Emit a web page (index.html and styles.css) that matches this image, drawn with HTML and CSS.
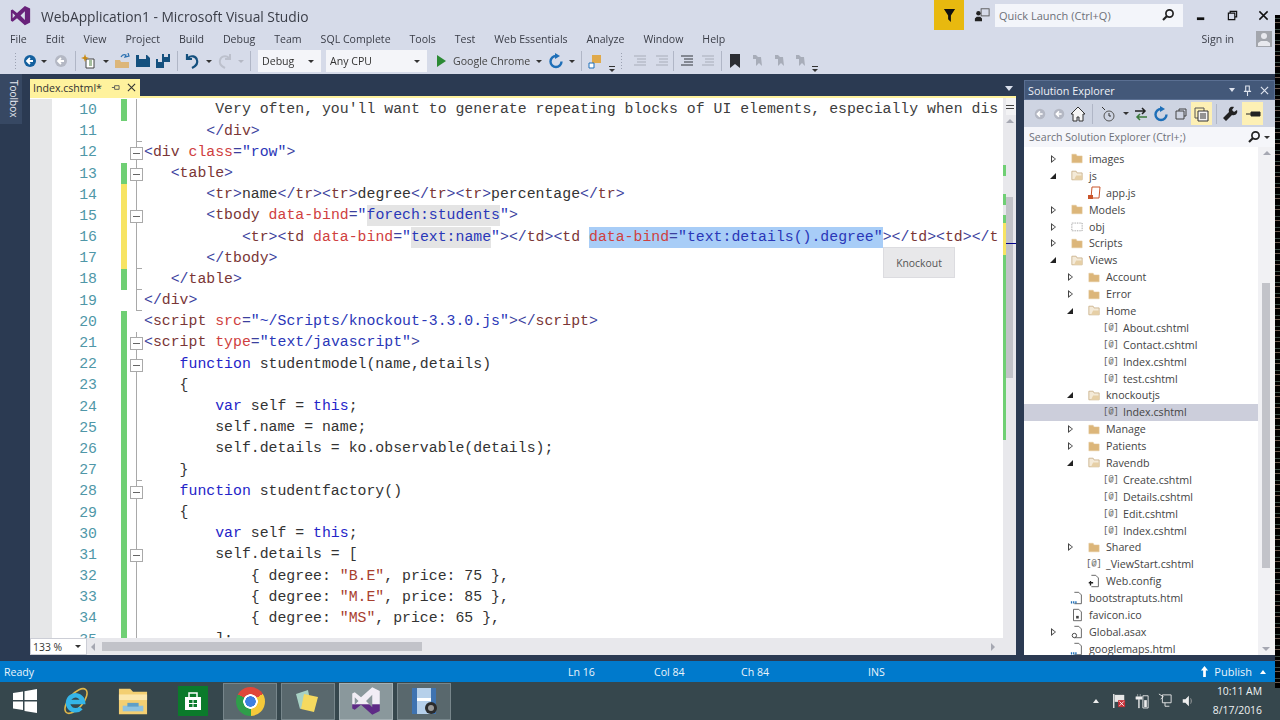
FILE: index.html
```html
<!DOCTYPE html>
<html lang="en">
<head>
<meta charset="utf-8">
<title>WebApplication1 - Microsoft Visual Studio</title>
<link rel="stylesheet" href="styles.css">
</head>
<body>
<svg class="defs" aria-hidden="true">
  <symbol id="fc" viewBox="0 0 14 12"><path d="M1 1h5l1 2h6v8H1z" fill="#dcb67a" stroke="#e3c99a" stroke-width=".6"/></symbol>
  <symbol id="fo" viewBox="0 0 14 12"><path d="M1 1h5l1 2h6v8H1z" fill="#f4ead8" stroke="#c9b18a"/><path d="M4 10l2-4h7v5H3z" fill="#e6cfa6"/></symbol>
  <symbol id="page" viewBox="0 0 14 16"><path d="M4 1.5h5l3 3v10H4" fill="#fff" stroke="#555" stroke-width="1"/></symbol>
  <symbol id="vs" viewBox="0 0 24 24"><path fill-rule="evenodd" d="M17 1l6 3v16l-6 3-9-8-5 4-2-1V6l2-1 5 4zm0 6l-5 5 5 5zM3 9v6l3-3z"/></symbol>
  <symbol id="blob" viewBox="0 0 16 16"><circle cx="8" cy="8" r="6"/><path d="M8 5L5 8l3 3M5 8h6" fill="none" stroke="#fff" stroke-width="1.8"/></symbol>
  <symbol id="lines" viewBox="0 0 16 16"><path d="M2 3h12M5 6h9M5 9h9M2 12h12" stroke="currentColor" fill="none"/></symbol>
  <symbol id="flagm" viewBox="0 0 16 16"><path d="M4 2h3l2 2h3l1 9-3-3-3 3V6H4z" fill="currentColor"/></symbol>
  <symbol id="search" viewBox="0 0 14 14"><circle cx="8.5" cy="5.5" r="3.6" fill="none" stroke="#222" stroke-width="1.7"/><path d="M6 8l-4 4" stroke="#222" stroke-width="2.2"/></symbol>
</svg>

<header class="title">
  <svg class="vs-logo"><use href="#vs"/></svg>
  <span class="app-name">WebApplication1 - Microsoft Visual Studio</span>
  <span class="filter"><svg class="filter-ic" viewBox="0 0 14 16"><path d="M1 1h12L8.500 8v7l-3-3V8z"/></svg></span>
  <svg class="feedback" viewBox="0 0 18 18"><rect x="8" y="2" width="9" height="8" fill="none" stroke="#555"/><circle cx="5" cy="7" r="2.500" fill="#222"/><path d="M1 16v-3l2-2h4l2 2v3z" fill="#222"/></svg>
  <div class="quick"><span>Quick Launch (Ctrl+Q)</span><svg class="s14"><use href="#search"/></svg></div>
  <div class="winbtns">
    <span class="winbtn"><svg class="w-ic" viewBox="0 0 12 12"><path d="M1 8h8v3H1z" fill="#111"/></svg></span>
    <span class="winbtn"><svg class="w-ic" viewBox="0 0 12 12"><path d="M3.500 3V1.500h7v6H8.500M1.500 3.500h7v7h-7z" fill="none" stroke="#111" stroke-width="1.300"/></svg></span>
    <span class="winbtn"><svg class="w-ic" viewBox="0 0 12 12"><path d="M1.500 1.500l9 9m0-9l-9 9" stroke="#111" stroke-width="1.600"/></svg></span>
  </div>
</header>

<nav class="menu">
  <span>File</span><span>Edit</span><span>View</span><span>Project</span><span>Build</span><span>Debug</span><span>Team</span><span>SQL Complete</span><span>Tools</span><span>Test</span><span>Web Essentials</span><span>Analyze</span><span>Window</span><span>Help</span>
  <span class="signin">Sign in</span>
  <svg class="user" viewBox="0 0 16 16"><rect width="16" height="16" fill="#a3a6ad"/><circle cx="8" cy="5" r="3" fill="#e8e9ee"/><path d="M2 15v-3l3-2h6l3 2v3z" fill="#e8e9ee"/></svg>
</nav>

<div class="tools">
  <span class="s w12"><i class="grip"></i></span>
  <span class="s w16"><svg class="i16 blue"><use href="#blob"/></svg></span>
  <span class="s w12"><i class="dd"></i></span>
  <span class="s w22"><svg class="i16 mute"><use href="#blob"/></svg></span>
  <span class="s w6"><i class="sep"></i></span>
  <span class="s w22"><svg class="i16" viewBox="0 0 16 16"><path d="M5 6h8v9H5z" fill="#fff" stroke="#444"/><path d="M4 1l1 3 3 1-3 1-1 3-1-3-3-1 3-1z" fill="#c98a12"/><path d="M8 8h3M8 10h3M8 12h3" stroke="#4d7e3e"/></svg></span>
  <span class="s w12"><i class="dd"></i></span>
  <span class="s w20"><svg class="i16" viewBox="0 0 16 16"><path d="M1 7h5l1 2h8v6H1z" fill="#dcb67a"/><path d="M7 4c1-2 3-3 5-2l-1 2 4-1-1-3" fill="none" stroke="#2a6fb0" stroke-width="1.200"/></svg></span>
  <span class="s w22"><svg class="i16" viewBox="0 0 16 16"><path d="M1 2h11l3 3v9H1z" fill="#14507e"/><path d="M4 2h7v4H4z" fill="#d6dbe9"/><path d="M4 10h8v4H4z" fill="#14507e"/></svg></span>
  <span class="s w18"><svg class="i16" viewBox="0 0 16 16"><path d="M7 1h8v8H7z" fill="#14507e"/><path d="M9 1h4v3H9z" fill="#d6dbe9"/><path d="M1 6h8v9H1z" fill="#14507e"/><path d="M3 6h4v3H3z" fill="#d6dbe9"/></svg></span>
  <span class="s w10"><i class="sep"></i></span>
  <span class="s w20"><svg class="i16" viewBox="0 0 16 16"><path d="M3 1v5h5M4 5c3-3 8-2 9 2 1 3-1 6-5 8" fill="none" stroke="#14507e" stroke-width="2.200"/></svg></span>
  <span class="s w14"><i class="dd"></i></span>
  <span class="s w18"><svg class="i16" viewBox="0 0 16 16"><path d="M13 1v5H8M12 5C9 2 4 3 3 7c-1 3 1 6 5 8" fill="none" stroke="#bcc0cc" stroke-width="2"/></svg></span>
  <span class="s w14"><i class="dd off"></i></span>
  <span class="s w4"><i class="sep"></i></span>
  <span class="combo debug">Debug<i class="dd"></i></span>
  <span class="combo cpu">Any CPU<i class="dd"></i></span>
  <span class="s w16 play"><i class="tri"></i></span>
  <span class="chrome">Google Chrome</span>
  <span class="s w14"><i class="dd"></i></span>
  <span class="s w20"><svg class="i16" viewBox="0 0 16 16"><path d="M8 3a5.500 5.500 0 1 0 5.500 5.500" fill="none" stroke="#1e6fb8" stroke-width="2.400"/><path d="M7 0l5 3-5 3z" fill="#1e6fb8"/></svg></span>
  <span class="s w12"><i class="dd"></i></span>
  <span class="s w6"><i class="sep"></i></span>
  <span class="s w22"><svg class="i16" viewBox="0 0 16 16"><path d="M5 2h9v8H5z" fill="#e0a94a"/><path d="M2 10h5v5H2z" fill="#fff" stroke="#1e6fb8"/></svg></span>
  <span class="s w12 low"><i class="more"></i></span>
  <span class="s w8"><i class="grip"></i></span>
  <span class="s w28 dim"><svg class="i16"><use href="#lines"/></svg></span>
  <span class="s w16 dim"><svg class="i16"><use href="#lines"/></svg></span>
  <span class="s w6"><i class="sep"></i></span>
  <span class="s w22 dark"><svg class="i16"><use href="#lines"/></svg></span>
  <span class="s w20 dim"><svg class="i16"><use href="#lines"/></svg></span>
  <span class="s w6"><i class="sep"></i></span>
  <span class="s w22"><svg class="i16" viewBox="0 0 16 16"><path d="M3 1h10v14l-5-4-5 4z" fill="#2b2d33"/></svg></span>
  <span class="s w22 dim"><svg class="i16"><use href="#flagm"/></svg></span>
  <span class="s w22 dim"><svg class="i16"><use href="#flagm"/></svg></span>
  <span class="s w20 dim"><svg class="i16"><use href="#flagm"/></svg></span>
  <span class="s w10 low"><i class="more"></i></span>
</div>

<main class="main">
  <aside class="toolbox"><span>Toolbox</span></aside>

  <section class="doc">
    <div class="tabs">
      <div class="tab">
        <span class="tab-name">Index.cshtml*</span>
        <svg class="pin" viewBox="0 0 10 10"><path d="M1 5h3M4 3h5v4H4z" fill="none" stroke="#555"/></svg>
        <svg class="tab-x" viewBox="0 0 10 10"><path d="M1 1l8 8m0-8l-8 8" stroke="#333" stroke-width="1.200"/></svg>
      </div>
      <i class="well-arrow"></i>
    </div>

    <div class="editor">
      <div class="code">
        <div class="row"><span class="gut"></span><span class="num">10</span><span class="bar g"></span><span class="fold ln"></span><span class="cd x">        Very often, you'll want to generate repeating blocks of UI elements, especially when dis</span></div>
        <div class="row"><span class="gut"></span><span class="num">11</span><span class="bar"></span><span class="fold end"></span><span class="cd">       <b class="d">&lt;/</b><b class="t">div</b><b class="d">&gt;</b></span></div>
        <div class="row"><span class="gut"></span><span class="num">12</span><span class="bar"></span><span class="fold box"></span><span class="cd"><b class="d">&lt;</b><b class="t">div</b> <b class="a">class</b><b class="d">=</b><b class="s">"row"</b><b class="d">&gt;</b></span></div>
        <div class="row"><span class="gut"></span><span class="num">13</span><span class="bar g"></span><span class="fold box"></span><span class="cd">   <b class="d">&lt;</b><b class="t">table</b><b class="d">&gt;</b></span></div>
        <div class="row"><span class="gut"></span><span class="num">14</span><span class="bar y"></span><span class="fold ln"></span><span class="cd">       <b class="d">&lt;</b><b class="t">tr</b><b class="d">&gt;</b>name<b class="d">&lt;/</b><b class="t">tr</b><b class="d">&gt;&lt;</b><b class="t">tr</b><b class="d">&gt;</b>degree<b class="d">&lt;/</b><b class="t">tr</b><b class="d">&gt;&lt;</b><b class="t">tr</b><b class="d">&gt;</b>percentage<b class="d">&lt;/</b><b class="t">tr</b><b class="d">&gt;</b></span></div>
        <div class="row"><span class="gut"></span><span class="num">15</span><span class="bar y"></span><span class="fold box"></span><span class="cd">       <b class="d">&lt;</b><b class="t">tbody</b> <b class="a">data-bind</b><b class="d">=</b><b class="s">"<em class="hl">forech:students</em>"</b><b class="d">&gt;</b></span></div>
        <div class="row"><span class="gut"></span><span class="num">16</span><span class="bar y"></span><span class="fold ln"></span><span class="cd">           <b class="d">&lt;</b><b class="t">tr</b><b class="d">&gt;&lt;</b><b class="t">td</b> <b class="a">data-bind</b><b class="d">=</b><b class="s">"<em class="hl">text:name</em>"</b><b class="d">&gt;&lt;/</b><b class="t">td</b><b class="d">&gt;&lt;</b><b class="t">td</b> <em class="sel"><b class="a">data-bind</b><b class="d">=</b><b class="s">"text:details().degree"</b></em><b class="d">&gt;&lt;/</b><b class="t">td</b><b class="d">&gt;&lt;</b><b class="t">td</b><b class="d">&gt;&lt;/</b><b class="t">t</b></span></div>
        <div class="row"><span class="gut"></span><span class="num">17</span><span class="bar y"></span><span class="fold end"></span><span class="cd">       <b class="d">&lt;/</b><b class="t">tbody</b><b class="d">&gt;</b></span></div>
        <div class="row"><span class="gut"></span><span class="num">18</span><span class="bar g"></span><span class="fold end"></span><span class="cd">   <b class="d">&lt;/</b><b class="t">table</b><b class="d">&gt;</b></span></div>
        <div class="row"><span class="gut"></span><span class="num">19</span><span class="bar"></span><span class="fold end"></span><span class="cd"><b class="d">&lt;/</b><b class="t">div</b><b class="d">&gt;</b></span></div>
        <div class="row"><span class="gut"></span><span class="num">20</span><span class="bar g"></span><span class="fold"></span><span class="cd"><b class="d">&lt;</b><b class="t">script</b> <b class="a">src</b><b class="d">=</b><b class="s">"~/Scripts/knockout-3.3.0.js"</b><b class="d">&gt;&lt;/</b><b class="t">script</b><b class="d">&gt;</b></span></div>
        <div class="row"><span class="gut"></span><span class="num">21</span><span class="bar g"></span><span class="fold box"></span><span class="cd"><b class="d">&lt;</b><b class="t">script</b> <b class="a">type</b><b class="d">=</b><b class="s">"text/javascript"</b><b class="d">&gt;</b></span></div>
        <div class="row"><span class="gut"></span><span class="num">22</span><span class="bar g"></span><span class="fold box"></span><span class="cd">    <b class="k">function</b> studentmodel(name,details)</span></div>
        <div class="row"><span class="gut"></span><span class="num">23</span><span class="bar g"></span><span class="fold ln"></span><span class="cd">    {</span></div>
        <div class="row"><span class="gut"></span><span class="num">24</span><span class="bar g"></span><span class="fold ln"></span><span class="cd">        <b class="k">var</b> self = <b class="k">this</b>;</span></div>
        <div class="row"><span class="gut"></span><span class="num">25</span><span class="bar g"></span><span class="fold ln"></span><span class="cd">        self.name = name;</span></div>
        <div class="row"><span class="gut"></span><span class="num">26</span><span class="bar g"></span><span class="fold ln"></span><span class="cd">        self.details = ko.observable(details);</span></div>
        <div class="row"><span class="gut"></span><span class="num">27</span><span class="bar g"></span><span class="fold end"></span><span class="cd">    }</span></div>
        <div class="row"><span class="gut"></span><span class="num">28</span><span class="bar g"></span><span class="fold box"></span><span class="cd">    <b class="k">function</b> studentfactory()</span></div>
        <div class="row"><span class="gut"></span><span class="num">29</span><span class="bar g"></span><span class="fold ln"></span><span class="cd">    {</span></div>
        <div class="row"><span class="gut"></span><span class="num">30</span><span class="bar g"></span><span class="fold ln"></span><span class="cd">        <b class="k">var</b> self = <b class="k">this</b>;</span></div>
        <div class="row"><span class="gut"></span><span class="num">31</span><span class="bar g"></span><span class="fold box"></span><span class="cd">        self.details = [</span></div>
        <div class="row"><span class="gut"></span><span class="num">32</span><span class="bar g"></span><span class="fold ln"></span><span class="cd">            { degree: <b class="r">"B.E"</b>, price: 75 },</span></div>
        <div class="row"><span class="gut"></span><span class="num">33</span><span class="bar g"></span><span class="fold ln"></span><span class="cd">            { degree: <b class="r">"M.E"</b>, price: 85 },</span></div>
        <div class="row"><span class="gut"></span><span class="num">34</span><span class="bar g"></span><span class="fold ln"></span><span class="cd">            { degree: <b class="r">"MS"</b>, price: 65 },</span></div>
        <div class="row"><span class="gut"></span><span class="num">35</span><span class="bar g"></span><span class="fold ln"></span><span class="cd">        ];</span></div>
        <div class="tip">Knockout</div>
      </div>
      <div class="vscroll">
        <i class="split"></i>
        <i class="up"></i>
        <div class="track"><i class="map"></i><i class="thumb"></i><i class="caret"></i></div>
      </div>
    </div>

    <div class="hbar">
      <div class="zoom">133 %<i class="dd"></i></div>
      <i class="arr-l"></i>
      <i class="hthumb"></i>
      <i class="arr-r"></i>
    </div>
  </section>

  <section class="se">
    <div class="se-head">
      <span class="se-title">Solution Explorer</span>
      <i class="se-dd"></i>
      <svg class="se-pin" viewBox="0 0 10 12"><path d="M3 1h4v6H3zM1 7h8M5 7v5" fill="none" stroke="#dfe4ef" stroke-width="1.200"/></svg>
      <svg class="se-x" viewBox="0 0 10 10"><path d="M1 1l8 8m0-8l-8 8" stroke="#dfe4ef" stroke-width="1.300"/></svg>
    </div>
    <div class="se-tools">
      <span class="s w22 start"><svg class="i14 mute"><use href="#blob"/></svg></span>
      <span class="s w16"><svg class="i14 mute"><use href="#blob"/></svg></span>
      <span class="s w22"><svg class="i16" viewBox="0 0 16 16"><path d="M8 1L1 8h2v7h4v-4h2v4h4V8h2z" fill="#f5f5f5" stroke="#333"/></svg></span>
      <span class="s w6"><i class="sep"></i></span>
      <span class="s w26"><svg class="i16" viewBox="0 0 16 16"><circle cx="9" cy="10" r="5" fill="none" stroke="#555"/><path d="M9 7v3h2M2 1l3 3" stroke="#333" fill="none"/></svg></span>
      <span class="s w10"><i class="dd"></i></span>
      <span class="s w20"><svg class="i16" viewBox="0 0 16 16"><path d="M2 5h10M9 2l3 3-3 3" stroke="#222" stroke-width="1.500" fill="none"/><path d="M14 11H4m3-3l-3 3 3 3" stroke="#3b7a3b" stroke-width="1.500" fill="none"/></svg></span>
      <span class="s w20"><svg class="i16" viewBox="0 0 16 16"><path d="M8 3a5.500 5.500 0 1 0 5.500 5.500" fill="none" stroke="#1e6fb8" stroke-width="2.400"/><path d="M7 0l5 3-5 3z" fill="#1e6fb8"/></svg></span>
      <span class="s w20"><svg class="i12" viewBox="0 0 12 12"><path d="M4 3V1h7v7H9M1 3h8v8H1z" fill="none" stroke="#444"/></svg></span>
      <span class="s on"><svg class="i16" viewBox="0 0 16 16"><path d="M1 2h9v10H1z" fill="none" stroke="#555"/><path d="M4 5h10v10H4z" fill="#f4f4f4" stroke="#333"/><path d="M6 8h6M6 10h6M6 12h6" stroke="#333"/></svg></span>
      <span class="s w8"><i class="sep"></i></span>
      <span class="s w20"><svg class="i16" viewBox="0 0 16 16"><path d="M15 4l-3 2-2-2 2-3c-3-1-6 1-5 5L1 12l3 3 6-6c4 1 6-2 5-5z" fill="#222"/></svg></span>
      <span class="s on gap"><svg class="i16" viewBox="0 0 16 16"><path d="M1 8h5M6 6h9v4H6z" stroke="#222" fill="#222"/></svg></span>
    </div>
    <div class="se-search"><span>Search Solution Explorer (Ctrl+;)</span><svg class="s14"><use href="#search"/></svg><i class="dd"></i></div>
    <div class="se-body">
      <div class="tree">
        <div class="it l0"><i class="ex"></i><span class="ic"><svg class="fold-ic"><use href="#fc"/></svg></span>images</div>
        <div class="it l0"><i class="ex open"></i><span class="ic"><svg class="fold-ic"><use href="#fo"/></svg></span>js</div>
        <div class="it l1"><i class="ex none"></i><span class="ic"><svg class="i14" viewBox="0 0 14 14"><path d="M5 1h8l-1 11H4z" fill="#fff" stroke="#c9542a"/><path d="M1 9h5v4H1z" fill="#c9542a"/></svg></span>app.js</div>
        <div class="it l0"><i class="ex"></i><span class="ic"><svg class="fold-ic"><use href="#fc"/></svg></span>Models</div>
        <div class="it l0"><i class="ex"></i><span class="ic"><svg class="fold-ic" viewBox="0 0 14 12"><path d="M1 2h12v9H1z" fill="none" stroke="#888" stroke-dasharray="1 1"/></svg></span>obj</div>
        <div class="it l0"><i class="ex"></i><span class="ic"><svg class="fold-ic"><use href="#fc"/></svg></span>Scripts</div>
        <div class="it l0"><i class="ex open"></i><span class="ic"><svg class="fold-ic"><use href="#fo"/></svg></span>Views</div>
        <div class="it l1"><i class="ex"></i><span class="ic"><svg class="fold-ic"><use href="#fc"/></svg></span>Account</div>
        <div class="it l1"><i class="ex"></i><span class="ic"><svg class="fold-ic"><use href="#fc"/></svg></span>Error</div>
        <div class="it l1"><i class="ex open"></i><span class="ic"><svg class="fold-ic"><use href="#fo"/></svg></span>Home</div>
        <div class="it l2"><i class="ex none"></i><span class="ic rz">[@]</span>About.cshtml</div>
        <div class="it l2"><i class="ex none"></i><span class="ic rz">[@]</span>Contact.cshtml</div>
        <div class="it l2"><i class="ex none"></i><span class="ic rz">[@]</span>Index.cshtml</div>
        <div class="it l2"><i class="ex none"></i><span class="ic rz">[@]</span>test.cshtml</div>
        <div class="it l1"><i class="ex open"></i><span class="ic"><svg class="fold-ic"><use href="#fo"/></svg></span>knockoutjs</div>
        <div class="it l2 cur"><i class="ex none"></i><span class="ic rz">[@]</span>Index.cshtml</div>
        <div class="it l1"><i class="ex"></i><span class="ic"><svg class="fold-ic"><use href="#fc"/></svg></span>Manage</div>
        <div class="it l1"><i class="ex"></i><span class="ic"><svg class="fold-ic"><use href="#fc"/></svg></span>Patients</div>
        <div class="it l1"><i class="ex open"></i><span class="ic"><svg class="fold-ic"><use href="#fo"/></svg></span>Ravendb</div>
        <div class="it l2"><i class="ex none"></i><span class="ic rz">[@]</span>Create.cshtml</div>
        <div class="it l2"><i class="ex none"></i><span class="ic rz">[@]</span>Details.cshtml</div>
        <div class="it l2"><i class="ex none"></i><span class="ic rz">[@]</span>Edit.cshtml</div>
        <div class="it l2"><i class="ex none"></i><span class="ic rz">[@]</span>Index.cshtml</div>
        <div class="it l1"><i class="ex"></i><span class="ic"><svg class="fold-ic"><use href="#fc"/></svg></span>Shared</div>
        <div class="it l1"><i class="ex none"></i><span class="ic rz">[@]</span>_ViewStart.cshtml</div>
        <div class="it l1"><i class="ex none"></i><span class="ic"><svg class="i14" viewBox="0 0 14 16"><use href="#page"/><path d="M1 10h5M3 8v5" stroke="#222" stroke-width="1.500"/></svg></span>Web.config</div>
        <div class="it l0"><i class="ex none"></i><span class="ic"><svg class="i14" viewBox="0 0 14 16"><use href="#page"/><path d="M0 13h7" stroke="#1e6fb8" stroke-width="2.500" stroke-dasharray="1.500 1"/></svg></span>bootstraptuts.html</div>
        <div class="it l0"><i class="ex none"></i><span class="ic"><svg class="i14" viewBox="0 0 14 16"><path d="M3 1.500h6l3 3v10H3z" fill="#fff" stroke="#555"/><path d="M6 9h3v3H6z" fill="#444"/></svg></span>favicon.ico</div>
        <div class="it l0"><i class="ex"></i><span class="ic"><svg class="i14" viewBox="0 0 14 16"><use href="#page"/><circle cx="4" cy="12" r="2.500" fill="#fff" stroke="#333"/></svg></span>Global.asax</div>
        <div class="it l0"><i class="ex none"></i><span class="ic"><svg class="i14" viewBox="0 0 14 16"><use href="#page"/><path d="M0 13h7" stroke="#1e6fb8" stroke-width="2.500" stroke-dasharray="1.500 1"/></svg></span>googlemaps.html</div>
      </div>
      <div class="se-scroll"><i class="up"></i><i class="se-thumb"></i><i class="down"></i></div>
    </div>
  </section>
</main>

<footer class="status">
  <span>Ready</span><span>Ln 16</span><span>Col 84</span><span>Ch 84</span><span>INS</span>
  <span class="publish"><svg class="pub-up" viewBox="0 0 10 12"><path d="M5 0l4 5H6.500v7h-3V5H1z" fill="#fff"/></svg>Publish<i class="caret-up"></i></span>
</footer>

<div class="taskbar">
  <span class="start-btn"><svg class="win" viewBox="0 0 24 24"><path d="M0 4l10-1.500V11H0zM11.500 2.300L24 0v11H11.500zM0 12.500h10V21L0 19.500zM11.500 12.500H24V24l-12.500-2z" fill="#fff"/></svg></span>
  <span class="pin-app ie"><svg class="app" viewBox="0 0 30 30"><ellipse cx="15" cy="15" rx="15" ry="7" transform="rotate(-50 15 15)" fill="none" stroke="#e2b84a" stroke-width="1.600"/><path d="M7 16h15a7.500 7.500 0 1 0-2 6" fill="none" stroke="#35b5e8" stroke-width="4.500"/></svg></span>
  <span class="pin-app fx"><svg class="app" viewBox="0 0 32 30"><path d="M1 2h12l3 3h15v24H1z" fill="#f3cf72"/><path d="M1 8h30v6H1z" fill="#fbe7ad"/><path d="M5 20h22v6H5z" fill="#8fc3e0"/><path d="M10 17h12v4H10z" fill="#5f9fc7"/></svg></span>
  <span class="pin-app st"><svg class="app" viewBox="0 0 30 30"><rect width="30" height="30" fill="#0b7a2b"/><path d="M7 11h16v13H7z" fill="#fff"/><path d="M11 11V7h8v4" fill="none" stroke="#fff" stroke-width="1.500"/><path d="M11 14h3.500v3H11zM15.500 14H19v3h-3.500zM11 18h3.500v3H11zM15.500 18H19v3h-3.500z" fill="#0b7a2b"/></svg></span>
  <span class="run"><i class="chrome-ic"></i></span>
  <span class="run"><svg class="app" viewBox="0 0 30 30"><path d="M3 8l12-4 3 15-11 4z" fill="#a8d2c4"/><path d="M11 8l14 3-4 15-13-3z" fill="#f5d95f"/></svg></span>
  <span class="run active"><svg class="app" viewBox="0 0 24 24"><defs><linearGradient id="vsg" x1="0" y1="0" x2="0" y2="1"><stop offset=".62" stop-color="#f1edf5"/><stop offset=".63" stop-color="#5e2a86"/></linearGradient></defs><path fill="url(#vsg)" fill-rule="evenodd" d="M17 1l6 3v16l-6 3-9-8-5 4-2-1V6l2-1 5 4zm0 6l-5 5 5 5zM3 9v6l3-3z"/></svg></span>
  <span class="run"><svg class="app" viewBox="0 0 30 30"><path d="M3 2h24v26H3z" fill="#b6d0ea"/><path d="M3 2h5v26H3zM22 2h5v26h-5z" fill="#3f73b0"/><path d="M8 12h14v3H8z" fill="#fff"/><circle cx="22" cy="22" r="6" fill="#2b2b2b"/><circle cx="22" cy="22" r="3" fill="#999"/></svg></span>
  <span class="spacer"></span>
  <div class="tray">
    <i class="tray-up"></i>
    <svg class="tray-ic" viewBox="0 0 16 18"><path d="M2 1v16" stroke="#eee" stroke-width="1.500"/><path d="M3 2h11v8H3z" fill="#e6e6e6"/><path d="M7 8h8v8H7z" fill="#c8323a"/><path d="M8.500 9.500l5 5m0-5l-5 5" stroke="#fff"/></svg>
    <svg class="tray-ic" viewBox="0 0 16 18"><path d="M3 1v3M6 1v3M1 4h7v3H5v10H4V7H1z" fill="#eee" stroke="#eee" stroke-width=".5"/><path d="M9 3h6v14H9z" fill="none" stroke="#eee"/><path d="M10.500 8h3v8h-3z" fill="#eee"/></svg>
    <svg class="tray-ic" viewBox="0 0 16 18"><path d="M5 2h10v9H5z" fill="#36474d" stroke="#eee"/><path d="M8 11v4h5M1 1l5 3-3 3" fill="none" stroke="#eee"/></svg>
    <svg class="tray-ic" viewBox="0 0 16 18"><path d="M2 7h3l4-4v12l-4-4H2z" fill="#eee"/><path d="M11 6c1 2 1 4 0 6" fill="none" stroke="#aaa"/></svg>
    <div class="clock"><span>10:11 AM</span><span>8/17/2016</span></div>
  </div>
</div>
<div class="noise"></div>
</body>
</html>
```
FILE: styles.css
```css
* { box-sizing: border-box; }
html, body { margin: 0; padding: 0; }
body {
  width: 1280px; height: 720px; overflow: hidden; position: relative;
  display: flex; flex-direction: column;
  background: #d6dbe9; color: #2d2d33;
  font-family: "Open Sans", "Liberation Sans", sans-serif; font-size: 11px;
  filter: blur(.4px);
}
i, em, b { font-style: normal; font-weight: normal; display: inline-block; }
em, b { display: inline; }
svg { display: block; flex: none; }
.defs { width: 0; height: 0; position: absolute; }

/* title bar */
.title { height: 30px; display: flex; align-items: center; padding-left: 10px; }
.vs-logo { width: 21px; height: 21px; fill: #68217a; }
.app-name { margin-left: 10px; padding-top: 2px; font-size: 13.8px; color: #3a3d47; width: 893px; white-space: nowrap; }
.filter { width: 30px; height: 30px; background: #e8b90f; display: flex; align-items: center; justify-content: center; }
.filter-ic { width: 13px; height: 15px; fill: #111; }
.feedback { width: 16px; height: 16px; margin-left: 10px; }
.quick { width: 188px; height: 23px; margin-left: 5px; background: #f3f5fa; display: flex; align-items: center; justify-content: space-between; padding: 0 8px 0 4px; color: #6d7078; font-size: 11px; }
.s14 { width: 14px; height: 14px; }
.winbtns { display: flex; margin-left: 3px; }
.winbtn { width: 31px; height: 30px; display: flex; align-items: center; justify-content: center; }
.w-ic { width: 11px; height: 11px; }

/* menu */
.menu { height: 18px; display: flex; align-items: center; gap: 18.9px; padding-left: 10px; font-size: 10.6px; color: #3a3d47; white-space: nowrap; }
.signin { margin-left: auto; margin-right: 3px; font-size: 10.6px; }
.user { width: 16px; height: 16px; margin-right: 8px; }

/* main toolbar */
.tools { height: 26px; display: flex; align-items: center; padding-left: 10px; }
.s { display: flex; align-items: center; justify-content: center; height: 22px; flex: none; }
.w4 { width: 4px; } .w6 { width: 6px; } .w8 { width: 8px; } .w10 { width: 10px; } .w12 { width: 12px; }
.w14 { width: 14px; } .w16 { width: 16px; } .w18 { width: 18px; } .w20 { width: 20px; } .w22 { width: 22px; }
.w26 { width: 26px; } .w28 { width: 28px; }
.i16 { width: 16px; height: 16px; }
.i14 { width: 14px; height: 14px; }
.i12 { width: 12px; height: 12px; }
.blue { fill: #14609f; }
.mute { fill: #b4b8c4; }
.dim { color: #a8adb9; }
.dark { color: #33363d; }
.grip { width: 4px; height: 18px; background-image: radial-gradient(#9ca2b2 1px, transparent 1px); background-size: 3px 3px; }
.dd { width: 0; height: 0; border-left: 3px solid transparent; border-right: 3px solid transparent; border-top: 3px solid #333; }
.dd.off { border-top-color: #b4b8c4; }
.sep { width: 1px; height: 20px; background: #b0b6c6; }
.combo { height: 22px; background: #f4f5f9; display: flex; align-items: center; justify-content: space-between; padding: 0 7px 0 4px; font-size: 10.6px; color: #333; flex: none; }
.debug { width: 63px; margin-left: 6px; }
.cpu { width: 101px; margin-left: 5px; }
.play { margin-left: 6px; }
.tri { width: 0; height: 0; border-left: 9px solid #2b8a34; border-top: 6px solid transparent; border-bottom: 6px solid transparent; }
.chrome { width: 79px; margin-left: 4px; font-size: 10.6px; white-space: nowrap; color: #444; }
.low { align-items: flex-end; }
.more { width: 6px; height: 6px; border-top: 1px solid #333; position: relative; }
.more::after { content: ""; display: block; margin-top: 2px; border-left: 3px solid transparent; border-right: 3px solid transparent; border-top: 3px solid #333; }

/* main */
.main { height: 587px; display: flex; background: #2b3a52; }
.toolbox { width: 30px; }
.toolbox span { display: block; width: 22px; height: 50px; background: #374863; color: #e6e9f0; font-size: 10px; writing-mode: vertical-rl; padding: 6px 0 0 4px; margin-top: 0; line-height: 16px; }

.doc { width: 986px; display: flex; flex-direction: column; }
.tabs { height: 24px; display: flex; justify-content: space-between; align-items: flex-end; border-bottom: 2px solid #fff29d; padding-right: 3px; }
.tab { width: 110px; height: 17px; background: #fff29d; display: flex; align-items: center; padding-left: 3px; color: #333; font-size: 10.6px; }
.tab-name { width: 78px; white-space: nowrap; }
.pin { width: 9px; height: 9px; }
.tab-x { width: 9px; height: 9px; margin-left: 7px; }
.well-arrow { width: 0; height: 0; margin-bottom: 5px; border-left: 4px solid transparent; border-right: 4px solid transparent; border-top: 5px solid #dbe0ec; }

.editor { height: 540px; display: flex; background: #fff; }
.code { width: 973px; padding-top: 1.4px; overflow: hidden; position: relative; font-family: "Liberation Mono", monospace; font-size: 14.83px; color: #333; }
.row { height: 21.2px; display: flex; align-items: center; white-space: pre; }
.gut { width: 22px; height: 100%; background: #e6e7e8; flex: none; }
.num { width: 45px; text-align: right; color: #4f97a8; flex: none; }
.bar { width: 6px; height: 100%; margin-left: 24px; margin-right: 3px; flex: none; }
.bar.g { background: #6fcf74; }
.bar.y { background: #f7e463; }
.fold { width: 11px; height: 100%; flex: none; position: relative; margin-right: 3px; }
.fold.ln::before, .fold.end::before, .fold.box::before { content: ""; position: absolute; left: 6px; top: 0; bottom: 0; width: 1px; background: #a9a9a9; }
.fold.end::after { content: ""; position: absolute; left: 6px; bottom: 0; width: 6px; height: 1px; background: #a9a9a9; }
.fold.box::after { content: ""; position: absolute; left: 0; top: 5px; width: 11px; height: 11px; border: 1px solid #a9a9a9; background: linear-gradient(#666, #666) center / 7px 1px no-repeat #fff; }
.cd { overflow: hidden; flex: 1; margin-right: 3px; height: 100%; line-height: 21px; }
.x { color: #3d3d3d; }
.d { color: #3b3f9e; }
.t { color: #7a3636; }
.a { color: #cf4040; }
.cd .s { color: #2a37b8; display: inline; height: auto; }
.k { color: #2424c8; }
.r { color: #a8402e; }
.hl { background: #e4e4e4; display: inline-block; }
.sel { background: #a8cdf7; display: inline-block; }
.tip { position: absolute; left: 853px; top: 149px; width: 72px; height: 31px; background: #e8e8ea; border: 1px solid #dcdce0; color: #555; font-family: "Open Sans", sans-serif; font-size: 10.4px; display: flex; align-items: center; justify-content: center; }

.vscroll { width: 13px; background: #e8e8ec; display: flex; flex-direction: column; align-items: center; position: relative; }
.split { width: 13px; height: 17px; background: linear-gradient(#444, #444) center 7px / 9px 1px no-repeat, linear-gradient(#444, #444) center 10px / 9px 1px no-repeat, #f2f2f4; }
.up { width: 0; height: 0; margin-top: 4px; border-left: 4px solid transparent; border-right: 4px solid transparent; border-bottom: 4px solid #a6a8b2; flex: none; }
.track { position: absolute; left: 0; top: 0; width: 100%; height: 100%; }
.map { position: absolute; left: 0; top: 0; width: 3px; height: 100%;
  background: linear-gradient(#e8e8ec 0 67px, #6fcf74 67px 78px, #e8e8ec 78px 96px, #6fcf74 96px 107px, #e8e8ec 107px 117px, #6fcf74 117px 125px, #f7e463 125px 157px, #6fcf74 157px 342px, #e8e8ec 342px); }
.thumb { position: absolute; left: 3px; top: 99px; width: 7px; height: 181px; background: #c2c3c9; }
.caret { position: absolute; left: 3px; top: 145px; width: 10px; height: 1px; background: #00008b; }

.hbar { height: 17px; background: #e8e8ec; display: flex; align-items: center; }
.zoom { width: 57px; height: 17px; background: #fff; border: 1px solid #ccced6; display: flex; align-items: center; justify-content: space-between; padding: 0 5px 0 2px; font-size: 10.4px; color: #333; }
.arr-l { width: 0; height: 0; margin-left: 4px; border-right: 4px solid #a6a8b2; border-top: 4px solid transparent; border-bottom: 4px solid transparent; }
.hthumb { width: 320px; height: 9px; margin-left: 7px; background: #c2c3c9; }
.arr-r { width: 0; height: 0; margin-left: 569px; border-left: 4px solid #a6a8b2; border-top: 4px solid transparent; border-bottom: 4px solid transparent; }

/* solution explorer */
.se { width: 251px; margin-left: 8px; margin-top: 6px; height: 575px; display: flex; flex-direction: column; background: #ccd2e0; }
.se-head { height: 20px; background: #435879; border: 1px solid #5a6f92; display: flex; align-items: center; padding: 0 3px; color: #eef1f6; font-size: 10.8px; }
.se-title { flex: 1; }
.se-dd { width: 0; height: 0; border-left: 3.500px solid transparent; border-right: 3.500px solid transparent; border-top: 4px solid #dfe4ef; }
.se-pin { width: 9px; height: 11px; margin-left: 8px; }
.se-x { width: 9px; height: 9px; margin-left: 8px; margin-right: 2px; }
.se-tools { height: 27px; display: flex; align-items: center; background: #ced4e2; }
.start { margin-left: 5px; }
.on { width: 21px; height: 23px; background: #fdf0b5; }
.gap { margin-left: 2px; }
.se-search { height: 20px; background: #f5f6fa; display: flex; align-items: center; padding: 0 5px; color: #6d7078; font-size: 10.6px; gap: 3px; }
.se-search span { flex: 1; }
.se-body { flex: 1; display: flex; background: #fff; overflow: hidden; min-height: 0; }
.tree { width: 234px; padding-top: 3.500px; overflow: hidden; font-size: 10.7px; color: #444; }
.it { height: 16.9px; display: flex; align-items: center; white-space: nowrap; }
.l0 { padding-left: 24px; }
.l1 { padding-left: 41px; }
.l2 { padding-left: 58px; }
.cur { background: #cccedb; }
.ex { width: 20px; flex: none; display: flex; justify-content: flex-start; }
.ex::before { content: ""; width: 0; height: 0; border-left: 5px solid #444; border-top: 4px solid transparent; border-bottom: 4px solid transparent; margin-left: 3px; }
.ex::after { content: ""; width: 0; height: 0; border-left: 3px solid #fff; border-top: 2px solid transparent; border-bottom: 2px solid transparent; margin: 2px 0 0 -4.500px; }
.ex.open::before { border: 0; border-right: 6px solid #222; border-top: 6px solid transparent; margin-left: 2px; }
.ex.open::after, .ex.none::before, .ex.none::after { display: none; }
.ic { width: 18px; margin-right: 3px; display: flex; justify-content: center; align-items: center; flex: none; }
.fold-ic { width: 12px; height: 11px; }
.rz { font-family: "Liberation Mono", monospace; font-size: 8.5px; color: #555; white-space: nowrap; }
.se-scroll { width: 17px; background: #f1f1f4; display: flex; flex-direction: column; align-items: center; position: relative; }
.se-thumb { position: absolute; top: 136px; left: 4px; width: 8px; height: 285px; background: #c2c3c9; }
.down { position: absolute; bottom: 4px; left: 4px; width: 0; height: 0; border-left: 4px solid transparent; border-right: 4px solid transparent; border-top: 4px solid #a6a8b2; }

/* status bar */
.status { height: 21px; background: #007acc; color: #eaf4fb; font-size: 10.6px; display: grid; grid-template-columns: 564px 86px 87px 127px 1fr auto; align-items: center; padding-left: 4px; }
.publish { display: flex; align-items: center; gap: 5px; padding-right: 14px; font-size: 11px; }
.pub-up { width: 9px; height: 11px; }
.caret-up { width: 0; height: 0; border-left: 3.500px solid transparent; border-right: 3.500px solid transparent; border-bottom: 4px solid #fff; margin-left: 3px; }

/* task bar */
.taskbar { height: 38px; background: #36474d; display: flex; align-items: center; color: #f0f2f3; }
.start-btn { width: 50px; display: flex; justify-content: center; padding-left: 0; }
.win { width: 24px; height: 24px; }
.pin-app { display: flex; justify-content: center; }
.ie { width: 50px; margin-left: 1px; }
.fx { width: 64px; }
.st { width: 55px; margin-right: 3px; }
.app { width: 30px; height: 30px; }
.run { width: 54px; height: 37px; margin-right: 4px; background: #59686d; border: 1px solid #77868b; display: flex; align-items: center; justify-content: center; flex: none; }
.active { background: #8a989c; border-color: #a4b0b4; }
.chrome-ic { width: 29px; height: 29px; border-radius: 50%; background: radial-gradient(circle, #3f7fe0 0 5px, #fff 5.500px 7px, transparent 7.500px), conic-gradient(from -60deg, #e0463a 0 33%, #f5c93a 33% 66%, #2f9e4a 66%); }
.spacer { flex: 1; }
.tray { display: flex; align-items: center; padding-right: 18px; }
.tray-up { width: 0; height: 0; border-left: 3.500px solid transparent; border-right: 3.500px solid transparent; border-bottom: 4px solid #eee; margin-right: 13px; }
.tray-ic { width: 14px; height: 16px; margin-right: 9px; }
.clock { display: flex; flex-direction: column; align-items: flex-end; font-size: 10.4px; line-height: 19px; margin-left: 9px; }

.noise { position: absolute; right: 0; top: 15px; bottom: 32px; width: 5px; background: repeating-linear-gradient(#000 0 3px, #3a4a44 3px 4px, #000 4px 7px, #6a5a50 7px 8px, #000 8px 11px); }
```
